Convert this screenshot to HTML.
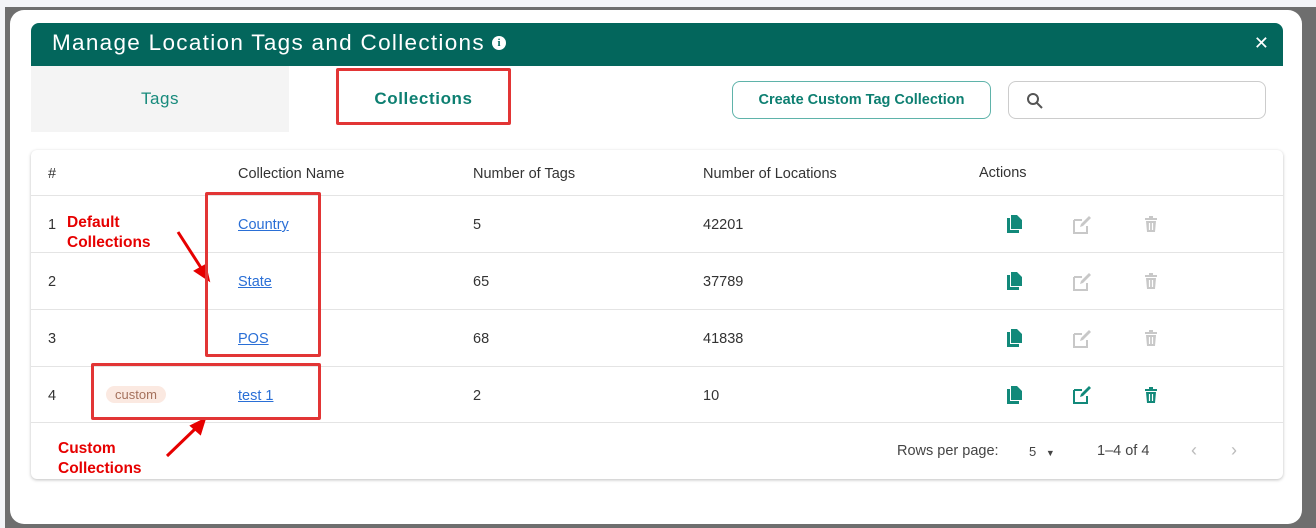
<!DOCTYPE html>
<html><head><meta charset="utf-8"><style>
*{box-sizing:border-box;margin:0;padding:0}
body{width:1316px;height:528px;background:#6e6e6e;position:relative;overflow:hidden;font-family:"Liberation Sans",sans-serif}
.topstrip{position:absolute;left:0;top:0;width:1316px;height:7px;background:#f3f4f7}
.leftstrip{position:absolute;left:0;top:0;width:5px;height:528px;background:#f3f4f7}
.modal{position:absolute;left:10px;top:10px;width:1292px;height:514px;background:#fff;border-radius:14px}
.hdr{position:absolute;left:31px;top:23px;width:1252px;height:43px;background:#03665c;border-radius:8px 8px 0 0;color:#fff}
.hdr .t{position:absolute;left:21px;top:7px;font-size:22.5px;letter-spacing:1.3px}
.info{position:absolute;left:461px;top:13px;width:14px;height:14px;border-radius:50%;background:#fff;color:#03665c;font-size:11px;font-weight:bold;text-align:center;line-height:14px;font-family:"Liberation Serif",serif}
.x{position:absolute;right:14px;top:10px;font-size:18px}
.tab1{position:absolute;left:31px;top:66px;width:258px;height:66px;background:#f4f4f4;color:#178a7c;font-size:17px;letter-spacing:0.5px;text-align:center;line-height:66px}
.tab2{position:absolute;left:336px;top:66px;width:175px;height:66px;color:#0d7f71;font-size:17px;letter-spacing:0.6px;font-weight:bold;text-align:center;line-height:66px}
.btn{position:absolute;left:732px;top:81px;width:259px;height:38px;border:1px solid #5fb3aa;border-radius:8px;color:#0d7f71;font-weight:bold;font-size:14.5px;text-align:center;line-height:36px}
.search{position:absolute;left:1008px;top:81px;width:258px;height:38px;border:1px solid #ccc;border-radius:8px}
.card{position:absolute;left:31px;top:150px;width:1252px;height:329px;background:#fff;border-radius:6px;box-shadow:0 1px 3px rgba(0,0,0,.25)}
.row{position:absolute;left:0;width:1252px;border-bottom:1px solid #e4e4e4;font-size:14.5px;color:#333}
.row span{position:absolute}
a{color:#2a6fd6;text-decoration:underline}
.pill{position:absolute;left:75px;top:19px;background:#fbe9e1;color:#a5715c;border-radius:10px;padding:1px 9px;font-size:13px}
.red{position:absolute;border:3px solid #e23535;border-radius:2px}
.ann{position:absolute;color:#e60000;font-weight:bold;font-size:15.5px;line-height:20px}
</style></head><body>
<div class="topstrip"></div><div class="leftstrip"></div>
<div class="modal"></div>
<div class="hdr"><div class="t">Manage Location Tags and Collections</div><div class="info">i</div><div class="x">✕</div></div>
<div class="tab1">Tags</div>
<div class="tab2">Collections</div>
<div class="btn">Create Custom Tag Collection</div>
<div class="search"><svg style="position:absolute;left:17px;top:10px" width="18" height="18" viewBox="0 0 18 18"><circle cx="7" cy="7" r="5" fill="none" stroke="#555" stroke-width="2"/><path d="M11 11l5 5" stroke="#555" stroke-width="2"/></svg></div>
<div class="card">
 <div class="row" style="top:0;height:46px"><span style="left:17px;top:16px">#</span><span style="left:207px;top:16px">Collection Name</span><span style="left:442px;top:16px">Number of Tags</span><span style="left:672px;top:16px">Number of Locations</span><span style="left:948px;top:15px">Actions</span></div>
 <div class="row" style="top:46px;height:57px"><span style="left:17px;top:21px">1</span><span style="left:207px;top:21px"><a>Country</a></span><span style="left:442px;top:21px">5</span><span style="left:672px;top:21px">42201</span></div>
 <div class="row" style="top:103px;height:57px"><span style="left:17px;top:21px">2</span><span style="left:207px;top:21px"><a>State</a></span><span style="left:442px;top:21px">65</span><span style="left:672px;top:21px">37789</span></div>
 <div class="row" style="top:160px;height:57px"><span style="left:17px;top:21px">3</span><span style="left:207px;top:21px"><a>POS</a></span><span style="left:442px;top:21px">68</span><span style="left:672px;top:21px">41838</span></div>
 <div class="row" style="top:217px;height:56px"><span style="left:17px;top:21px">4</span><div class="pill">custom</div><span style="left:207px;top:21px"><a>test 1</a></span><span style="left:442px;top:21px">2</span><span style="left:672px;top:21px">10</span></div>
 <div style="position:absolute;top:293px;left:866px;font-size:14.5px;color:#444">Rows per page:</div>
 <div style="position:absolute;top:294px;left:998px;font-size:13px;color:#444">5 <span style="font-size:9px;margin-left:6px">▼</span></div>
 <div style="position:absolute;top:293px;left:1066px;font-size:14.5px;color:#444">1–4 of 4</div>
 <div style="position:absolute;top:290px;left:1160px;font-size:18px;color:#bbb">‹</div>
 <div style="position:absolute;top:290px;left:1200px;font-size:18px;color:#bbb">›</div>
</div>
<svg width="1316" height="528" style="position:absolute;left:0;top:0">
<defs>
<g id="cp"><path d="M3 4h3v12h9v3H3z M7 1h6l5 5v9H7z" fill="currentColor"/></g>
<g id="ed"><path d="M2 5h8M2 5v13h13v-7" fill="none" stroke="currentColor" stroke-width="2"/><path d="M8 12l1-3 8-8 2 2-8 8z" fill="currentColor"/></g>
<g id="tr"><path d="M3 4h12v2H3zM7 2h4v2H7zM4 7h10l-1 11H5z" fill="currentColor"/><path d="M7.5 9v7M10.5 9v7" stroke="#fff" stroke-width="1.2"/></g>
</defs>
<g style="color:#12897a">
<use href="#cp" x="1004" y="214"/><use href="#cp" x="1004" y="271"/><use href="#cp" x="1004" y="328"/><use href="#cp" x="1004" y="385"/>
<use href="#ed" x="1072" y="385"/>
<use href="#tr" x="1142" y="385"/>
</g>
<g style="color:#c8c8c8">
<use href="#ed" x="1072" y="215"/><use href="#ed" x="1072" y="272"/><use href="#ed" x="1072" y="329"/>
<use href="#tr" x="1142" y="214"/><use href="#tr" x="1142" y="271"/><use href="#tr" x="1142" y="328"/>
</g>
<path d="M178 232l27 42" stroke="#e60000" stroke-width="3"/><path d="M208 279l-12-8 9-5z" fill="#e60000" stroke="#e60000" stroke-width="3"/>
<path d="M167 456l28-27" stroke="#e60000" stroke-width="3"/><path d="M204 420l-4 13-8-7z" fill="#e60000" stroke="#e60000" stroke-width="3"/>
</svg>
<div class="red" style="left:336px;top:68px;width:175px;height:57px"></div>
<div class="red" style="left:205px;top:192px;width:116px;height:165px"></div>
<div class="red" style="left:91px;top:363px;width:230px;height:57px"></div>
<div class="ann" style="left:67px;top:213px">Default<br>Collections</div>
<div class="ann" style="left:58px;top:439px">Custom<br>Collections</div>
</body></html>
